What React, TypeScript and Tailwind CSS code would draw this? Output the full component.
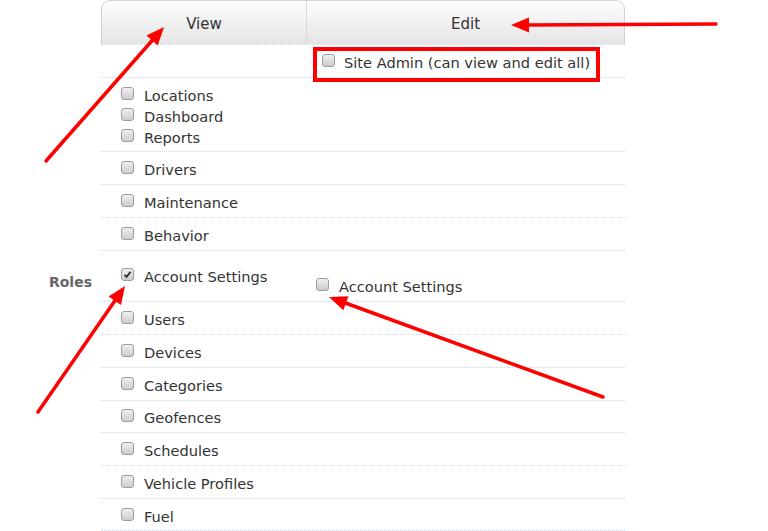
import React from 'react';

type Row = {
  view: string[];
  edit?: React.ReactNode;
  viewPad?: string;
  editPad?: string;
  checked?: boolean;
};

function Box({ checked }: { checked?: boolean }) {
  return (
    <span className="mb-[4px] flex h-[13px] w-[13px] shrink-0 items-center justify-center rounded-[3px] border border-[#9d9d9d] bg-linear-to-b from-[#efefef] to-[#cdcdcd]">
      {checked && (
        <svg width="9" height="9" viewBox="0 0 9 9">
          <path d="M1.5 4.8 L3.6 6.9 L7.6 1.8" fill="none" stroke="#2b2b2b" strokeWidth="1.8" />
        </svg>
      )}
    </span>
  );
}

function Item({ label, checked }: { label: string; checked?: boolean }) {
  return (
    <div className="flex items-center gap-[10px] leading-[21px]">
      <Box checked={checked} />
      <span>{label}</span>
    </div>
  );
}

const rows: Row[] = [
  {
    view: [],
    edit: (
      <div className="relative ml-[6px] flex items-center gap-[9px] leading-[21px]">
        <Box />
        <span>Site Admin (can view and edit all)</span>
        <div className="absolute left-[-9px] top-[-5px] h-[35px] w-[287px] border-4 border-[#f00]" />
      </div>
    ),
  },
  { view: ['Locations', 'Dashboard', 'Reports'] },
  { view: ['Drivers'] },
  { view: ['Maintenance'] },
  { view: ['Behavior'] },
  {
    view: ['Account Settings'],
    checked: true,
    viewPad: 'pt-[15.7px]',
    editPad: 'pt-[25.7px]',
    edit: <Item label="Account Settings" />,
  },
  { view: ['Users'] },
  { view: ['Devices'] },
  { view: ['Categories'] },
  { view: ['Geofences'] },
  { view: ['Schedules'] },
  { view: ['Vehicle Profiles'] },
  { view: ['Fuel'] },
];

const arrows: [number, number, number, number][] = [
  [46, 161, 164, 27],
  [716, 24, 511, 25],
  [38, 412, 125, 286],
  [603, 397, 329, 297],
];

function Arrow({ a }: { a: [number, number, number, number] }) {
  const [x1, y1, x2, y2] = a;
  const len = Math.hypot(x2 - x1, y2 - y1);
  const dx = (x2 - x1) / len;
  const dy = (y2 - y1) / len;
  const bx = x2 - dx * 18;
  const by = y2 - dy * 18;
  const pts = `${x2},${y2} ${bx - dy * 7.5},${by + dx * 7.5} ${bx + dy * 7.5},${by - dx * 7.5}`;
  return (
    <g>
      <line x1={x1} y1={y1} x2={bx + dx * 2} y2={by + dy * 2} stroke="#f00" strokeWidth="3.5" strokeLinecap="round" />
      <polygon points={pts} fill="#f00" />
    </g>
  );
}

export default function App() {
  return (
    <div className="relative h-[531px] w-[768px] overflow-hidden bg-white font-['DejaVu_Sans',Verdana,sans-serif] text-[14.6px] text-[#333]">
      <div className="flex">
        <div className="w-[101px] pr-[9px] pt-[272px] text-right text-[14px] font-bold leading-[20px] text-[#666]">
          Roles
        </div>
        <div className="w-[524px]">
          <div className="grid h-[44px] grid-cols-[205px_1fr] rounded-t-[9px] border border-b-0 border-[#d3d3d3] bg-linear-to-b from-[#fdfdfd] to-[#e5e5e5]">
            <div className="flex items-center justify-center border-r border-[#d8d8d8] pt-[4px] text-[15px]">View</div>
            <div className="flex items-center justify-center pt-[4px] text-[15px]">Edit</div>
          </div>
          <div className="border-t border-dotted border-[#c9dcef]">
            {rows.map((r, i) => (
              <div key={i} className="grid grid-cols-[205px_1fr] border-b border-dotted border-[#c9dcef]">
                <div className={`pl-[20px] pb-[3.95px] ${r.viewPad ?? 'pt-[6.8px]'}`}>
                  {r.view.map((v) => (
                    <Item key={v} label={v} checked={r.checked} />
                  ))}
                  {r.view.length === 0 && <div className="h-[21px]" />}
                </div>
                <div className={`pl-[10px] pb-[3.95px] ${r.editPad ?? 'pt-[6.8px]'}`}>{r.edit}</div>
              </div>
            ))}
          </div>
        </div>
      </div>
      <svg className="pointer-events-none absolute inset-0" width="768" height="531">
        {arrows.map((a, i) => (
          <Arrow key={i} a={a} />
        ))}
      </svg>
    </div>
  );
}
